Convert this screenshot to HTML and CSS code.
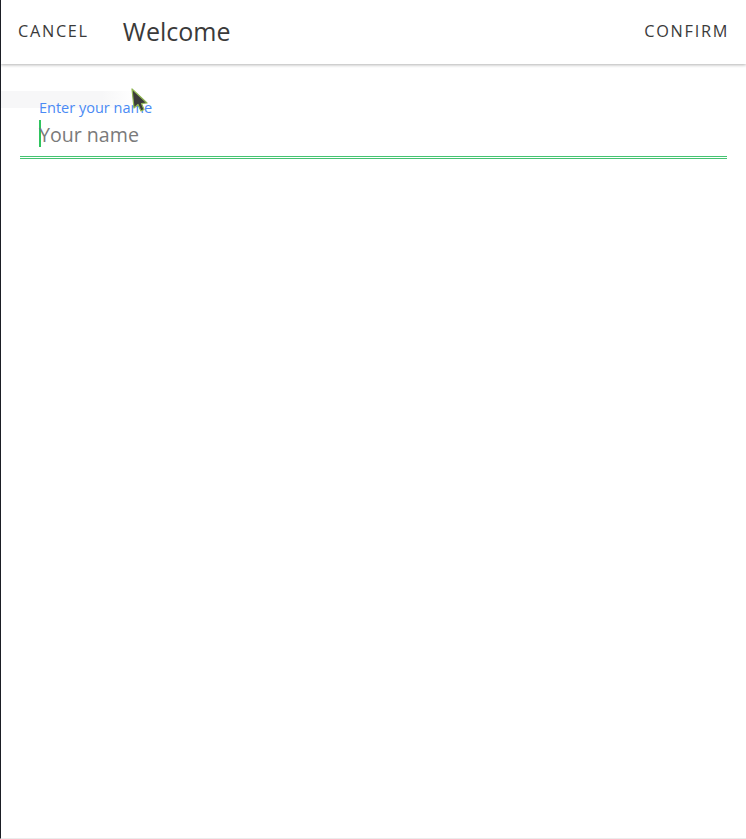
FILE: index.html
```html
<!DOCTYPE html>
<html>
<head>
<meta charset="utf-8">
<link rel="stylesheet" href="styles.css">
</head>
<body>
<div class="screen">
  <header class="toolbar">
    <div class="toolbar-left">
      <span class="btn">CANCEL</span>
      <span class="title">Welcome</span>
    </div>
    <span class="btn">CONFIRM</span>
  </header>
  <main class="content">
    <div class="band"></div>
    <div class="field">
      <label class="label">Enter your name</label>
      <div class="input"><span class="caret"></span><span class="placeholder">Your name</span></div>
      <div class="underline"></div>
    </div>
    <svg class="pointer" width="20" height="28" viewBox="0 0 20 28">
      <polygon points="1,1 3,20 7,16.5 10,23 13,21.5 10.5,15.5 16,15" fill="#3b3b3b" stroke="#8fb552" stroke-width="1.2" stroke-linejoin="round"/>
    </svg>
  </main>
</div>
</body>
</html>
```
FILE: styles.css
```css
html, body {
  margin: 0;
  padding: 0;
  height: 100%;
  background: #ffffff;
}
.screen {
  box-sizing: border-box;
  height: 839px;
  border-left: 1px solid #1b1e25;
  border-bottom: 1px solid #ececec;
  font-family: "Open Sans", "Noto Sans", sans-serif;
  position: relative;
  overflow: hidden;
}
.toolbar {
  height: 64px;
  display: flex;
  align-items: center;
  justify-content: space-between;
  padding: 0 17px 2px 17px;
  box-sizing: border-box;
  box-shadow: 0 1px 3px rgba(0,0,0,0.3);
  position: relative;
  z-index: 2;
  background: #fff;
}
.toolbar-left {
  display: flex;
  align-items: center;
  gap: 34px;
}
.btn {
  font-size: 16.3px;
  letter-spacing: 1.7px;
  color: #3a3a3a;
  font-weight: 500;
}
.title {
  font-size: 25px;
  color: #3a3a3a;
}
.content {
  position: relative;
  padding: 34px 19px 0 19px;
}
.band {
  position: absolute;
  left: 0;
  top: 27px;
  width: 135px;
  height: 17px;
  background: linear-gradient(to right, #f7f7f8 75%, rgba(247,247,248,0));
}
.field {
  position: relative;
  display: flex;
  flex-direction: column;
}
.label {
  font-size: 14.5px;
  color: #4a8af4;
  padding-left: 19px;
  line-height: 19px;
}
.input {
  display: flex;
  align-items: center;
  padding-left: 19px;
  height: 30px;
  margin-top: 1px;
}
.caret {
  width: 2px;
  height: 27px;
  background: #2fc45f;
  margin-right: -2px;
}
.placeholder {
  font-size: 19.6px;
  color: #7a7a7a;
  line-height: 27px;
  padding-top: 3px;
}
.underline {
  margin-top: 8px;
  height: 1px;
  border-top: 1px solid #45c472;
  border-bottom: 1px solid #45c472;
  width: 707px;
}
.pointer {
  position: absolute;
  left: 130px;
  top: 24px;
  z-index: 3;
}
```
